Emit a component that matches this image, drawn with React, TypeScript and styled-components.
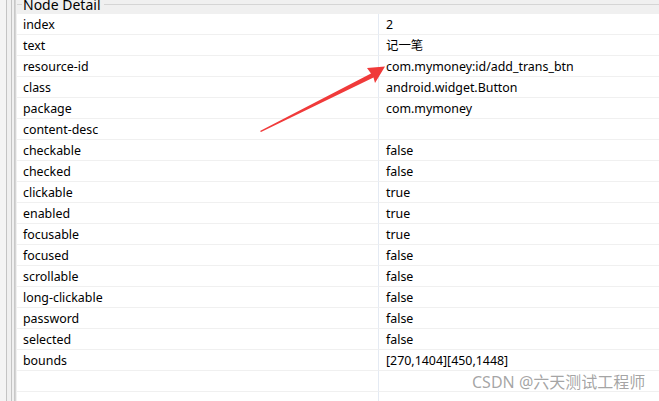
import React from "react";
import styled, { createGlobalStyle } from "styled-components";

const Global = createGlobalStyle`
  html, body { margin: 0; padding: 0; background: #f0f0f0; }
  body { font-family: "Noto Sans", "Noto Sans CJK SC", sans-serif; }
`;

const Page = styled.div`
  position: relative;
  display: flex;
  width: 659px;
  height: 401px;
  overflow: hidden;
  background: #f0f0f0;
`;

const Sash = styled.div`
  flex: 0 0 15px;
  background: linear-gradient(
    to right,
    #f4f4f4 0 6px,
    #c4c4c4 6px 7px,
    #f0f0f0 7px 11px,
    #c4c4c4 11px 12px,
    #f0f0f0 12px 14px,
    #c8c8c8 14px 15px
  );
`;

const Group = styled.div`
  flex: 1;
  display: flex;
  flex-direction: column;
  border-left: 1px solid #d5d5d5;
  padding-left: 1px;
  min-width: 0;
`;

const GroupHeader = styled.div`
  display: flex;
  align-items: flex-start;
  height: 14px;
  flex: 0 0 14px;
`;

const Corner = styled.div`
  width: 5px;
  margin-top: 4px;
  border-top: 1px solid #d5d5d5;
`;

const Legend = styled.div`
  margin-top: -4px;
  padding: 0 3px 0 1px;
  font-size: 14px;
  line-height: 17px;
  color: #000;
  white-space: nowrap;
`;

const HeaderLine = styled.div`
  flex: 1;
  margin-top: 4px;
  border-top: 1px solid #d5d5d5;
`;

const Table = styled.div`
  flex: 1;
  background: #fff;
  display: grid;
  grid-template-columns: 361px 1fr;
  grid-auto-rows: 21px;
  align-content: start;
`;

const Cell = styled.div<{ $value?: boolean }>`
  display: flex;
  align-items: center;
  padding-left: ${(p) => (p.$value ? "7px" : "6px")};
  border-bottom: 1px solid #f0f0f0;
  border-left: ${(p) => (p.$value ? "1px solid #e4eaf3" : "none")};
  font-size: 12.4px;
  color: #000;
  white-space: nowrap;
  overflow: hidden;
`;

const Overlay = styled.svg`
  position: absolute;
  left: 0;
  top: 0;
  pointer-events: none;
`;

const Watermark = styled.div`
  position: absolute;
  left: 472px;
  top: 371px;
  font-family: "Noto Sans", "Noto Sans CJK SC", sans-serif;
  font-size: 16px;
  line-height: 22px;
  color: rgba(130, 130, 130, 0.72);
  white-space: nowrap;
`;

const rows: [string, string][] = [
  ["index", "2"],
  ["text", "记一笔"],
  ["resource-id", "com.mymoney:id/add_trans_btn"],
  ["class", "android.widget.Button"],
  ["package", "com.mymoney"],
  ["content-desc", ""],
  ["checkable", "false"],
  ["checked", "false"],
  ["clickable", "true"],
  ["enabled", "true"],
  ["focusable", "true"],
  ["focused", "false"],
  ["scrollable", "false"],
  ["long-clickable", "false"],
  ["password", "false"],
  ["selected", "false"],
  ["bounds", "[270,1404][450,1448]"],
  ["", ""],
  ["", ""],
];

export default function App() {
  return (
    <>
      <Global />
      <Page>
        <Sash />
        <Group>
          <GroupHeader>
            <Corner />
            <Legend>Node Detail</Legend>
            <HeaderLine />
          </GroupHeader>
          <Table>
            {rows.map(([k, v], i) => (
              <React.Fragment key={i}>
                <Cell>{k}</Cell>
                <Cell $value>{v}</Cell>
              </React.Fragment>
            ))}
          </Table>
        </Group>
        <Overlay width="659" height="401" viewBox="0 0 659 401">
          <polygon
            points="260,131 371,73.5 367,68 385,66.5 375,83 373.5,77.5 261,132"
            fill="#f03a3a"
          />
        </Overlay>
        <Watermark>CSDN @六天测试工程师</Watermark>
      </Page>
    </>
  );
}
